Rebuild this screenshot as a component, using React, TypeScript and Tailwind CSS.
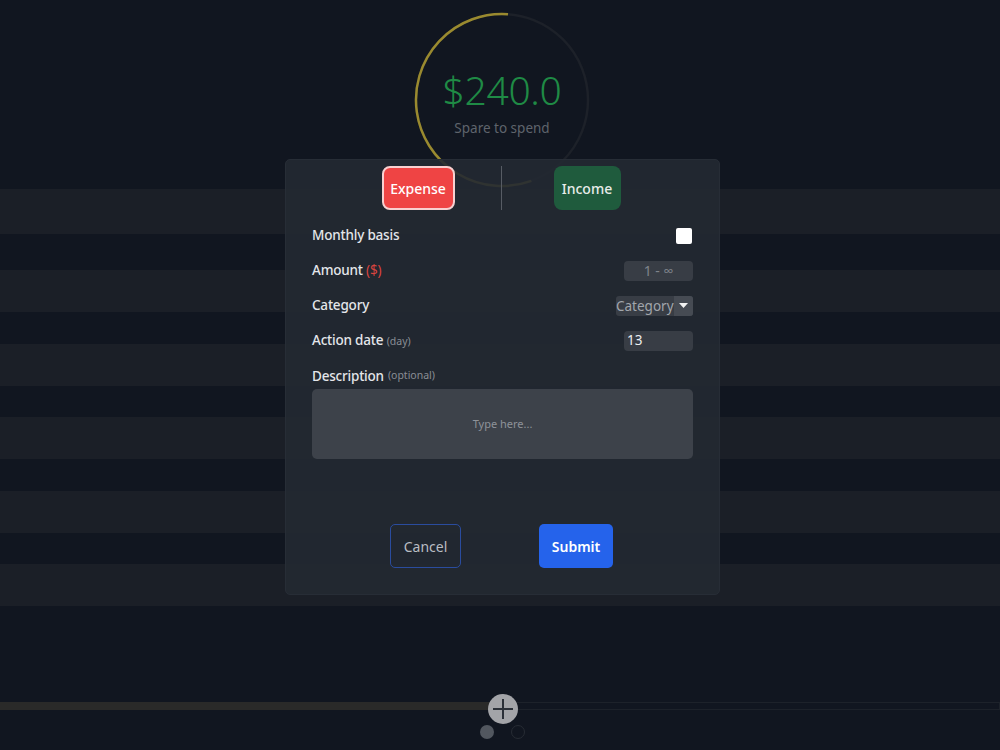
import React from "react";

const font = { fontFamily: '"Noto Sans", "Open Sans", sans-serif' };

function Ring() {
  return (
    <div className="relative w-[176px] h-[176px]">
      <svg width="176" height="176" viewBox="0 0 176 176" className="block">
        <circle cx="88" cy="88" r="86" fill="none" stroke="#1d2129" strokeWidth="2.5" />
        <path
          d="M 94 2.2 A 86 86 0 1 0 117.4 168.8"
          fill="none"
          stroke="#9a8a2f"
          strokeWidth="2.5"
        />
      </svg>
      <div className="absolute inset-0 flex flex-col items-center pt-[55px]">
        <div className="text-[39px] leading-[46px] font-light text-[#1f8a45] tracking-[-0.3px]">$240.0</div>
        <div className="text-[13.5px] leading-[18px] text-[#5f646c] mt-[6px]">Spare to spend</div>
      </div>
    </div>
  );
}

const stripes: { h: string; light: boolean }[] = [
  { h: "h-[45px]", light: true },
  { h: "h-[36px]", light: false },
  { h: "h-[42px]", light: true },
  { h: "h-[32px]", light: false },
  { h: "h-[42px]", light: true },
  { h: "h-[31px]", light: false },
  { h: "h-[42px]", light: true },
  { h: "h-[32px]", light: false },
  { h: "h-[42px]", light: true },
  { h: "h-[31px]", light: false },
  { h: "h-[42px]", light: true },
];

function Row({ children, right }: { children: React.ReactNode; right: React.ReactNode }) {
  return (
    <div className="h-[35px] flex items-center justify-between">
      <div className="text-[13.5px] tracking-[-0.2px] font-medium text-[#e4e6ea]">{children}</div>
      {right}
    </div>
  );
}

export default function App() {
  return (
    <div style={font} className="relative w-[1000px] h-[750px] overflow-hidden bg-[#111620] flex flex-col">
      <div className="h-[189px] flex justify-center pl-[4px] pt-[12px]">
        <Ring />
      </div>
      <div className="flex flex-col">
        {stripes.map((s, i) => (
          <div key={i} className={`${s.h} ${s.light ? "bg-[#1b1f27]" : "bg-[#111620]"}`} />
        ))}
      </div>
      <div className="flex-1" />
      <div className="h-[48px] flex flex-col">
        <div className="relative h-[8px] flex">
          <div className="w-[491px] h-full bg-[#2a2a29]" />
          <div className="flex-1 h-full border border-l-0 border-[#1d222a]" />
          <div className="absolute left-[488px] top-[-8px] w-[30px] h-[30px] rounded-full bg-[#a3a4a8] flex items-center justify-center">
            <svg width="22" height="22" viewBox="0 0 22 22">
              <path d="M11 1 V21 M1 11 H21" stroke="#2b3038" strokeWidth="2" />
            </svg>
          </div>
        </div>
        <div className="flex justify-center pl-[5px] gap-[17px] mt-[15px]">
          <div className="w-[14px] h-[14px] rounded-full bg-[#52575f]" />
          <div className="w-[14px] h-[14px] rounded-full border border-[#272c34]" />
        </div>
      </div>

      <div className="absolute left-[285px] top-[159px] w-[435px] h-[436px] rounded-[5px] bg-[#232932]/90 border border-[#272d36] flex flex-col px-[26px] pt-[6px]">
        <div className="flex justify-center items-center pr-[3px]">
          <button className="w-[73px] h-[44px] rounded-[8px] bg-[#ef4444] border-2 border-[#f8d0d0] text-white text-[14px] font-medium">
            Expense
          </button>
          <div className="w-px h-[44px] bg-[#575c64] ml-[46px] mr-[52px]" />
          <button className="w-[67px] h-[44px] rounded-[8px] bg-[#1f5b3d] text-[#e8ece9] text-[14px] font-medium">
            Income
          </button>
        </div>
        <div className="mt-[8px] flex flex-col">
          <Row right={<div className="w-[16px] h-[16px] rounded-[2px] bg-white mr-px" />}>Monthly basis</Row>
          <Row
            right={
              <div className="w-[69px] h-[20px] rounded-[4px] bg-[#383d45] flex items-center justify-center text-[14px] text-[#7f848b]">
                1 - ∞
              </div>
            }
          >
            Amount <span className="text-[#d9443f] font-normal">($)</span>
          </Row>
          <Row
            right={
              <div className="w-[77px] h-[20px] rounded-[3px] bg-[#383d45] flex items-center overflow-hidden">
                <div className="flex-1 text-[13.5px] text-[#a2a6ac] leading-[20px]">Category</div>
                <div className="w-[19px] h-full bg-[#464b53] flex items-center justify-center">
                  <svg width="9" height="5" viewBox="0 0 9 5">
                    <path d="M0 0 H9 L4.5 5 Z" fill="#f2f2f2" />
                  </svg>
                </div>
              </div>
            }
          >
            Category
          </Row>
          <Row
            right={
              <div className="w-[69px] h-[20px] rounded-[4px] bg-[#383d45] flex items-center pl-[3px] text-[13.5px] text-[#eceef0]">
                13
              </div>
            }
          >
            Action date <span className="text-[10.5px] tracking-normal font-normal text-[#8a8e95]">(day)</span>
          </Row>
          <div className="mt-[8px] h-[20px] flex items-center text-[13.5px] tracking-[-0.2px] font-medium text-[#e4e6ea]">
            Description<span className="ml-[4px] tracking-normal text-[10.5px] font-normal text-[#8a8e95]">(optional)</span>
          </div>
          <div className="mt-[3px] h-[70px] rounded-[5px] bg-[#3d424a] flex items-center justify-center text-[11px] text-[#8e9299]">
            Type here...
          </div>
        </div>
        <div className="flex-1" />
        <div className="flex justify-center gap-[78px] pr-[2px] mb-[26px]">
          <button className="w-[71px] h-[44px] rounded-[5px] border border-[#2a4c9e] text-[14px] text-[#b9bdc3]">
            Cancel
          </button>
          <button className="w-[74px] h-[44px] rounded-[5px] bg-[#2563eb] text-[14px] font-semibold text-white">
            Submit
          </button>
        </div>
      </div>
    </div>
  );
}
